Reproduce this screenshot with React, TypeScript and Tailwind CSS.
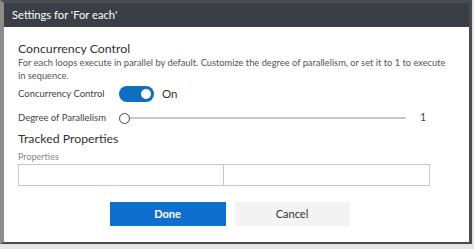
import React, { useState } from 'react';

const font = { fontFamily: 'Lato, "Noto Sans", sans-serif' };

const App: React.FC = () => {
  const [on, setOn] = useState(true);
  const [degree, setDegree] = useState(1);

  return (
    <div className="w-[474px] h-[249px] bg-[#e4e4e4] overflow-hidden" style={font}>
      <div className="w-[472px] h-[244px] flex flex-col border-t-[3px] border-t-[#4a4d52] border-l-[4px] border-l-[#8c8c8c] border-r-[3px] border-r-[#4b4b4b] border-b-[2px] border-b-[#4b4b4b] bg-white">
        <div className="h-[24px] bg-[#3b3f45] text-white text-[11.2px] leading-[24px] pl-[8px] shrink-0">
          Settings for 'For each'
        </div>

        <div className="flex flex-col pl-[14px] pr-[14px]">
          <div className="mt-[15px] h-[14px] text-[12.3px] leading-[14px] text-[#323130]">Concurrency Control</div>
          <div className="h-[26px] text-[9.3px] leading-[13px] text-[#555]">
            For each loops execute in parallel by default. Customize the degree of parallelism, or set it to 1 to execute in sequence.
          </div>

          <div className="flex items-center mt-[4px] h-[16px]">
            <div className="w-[101px] whitespace-nowrap text-[9.5px] text-[#444]">Concurrency Control</div>
            <button
              onClick={() => setOn(!on)}
              className={`w-[35px] h-[16px] rounded-full flex items-center px-[3px] ${on ? 'bg-[#106ebe] justify-end' : 'bg-[#c8c8c8] justify-start'}`}
            >
              <span className="w-[10px] h-[10px] rounded-full bg-white block" />
            </button>
            <span className="ml-[8px] text-[11.5px] text-[#333]">{on ? 'On' : 'Off'}</span>
          </div>

          <div className="flex items-center mt-[8px] h-[16px]">
            <div className="w-[101px] whitespace-nowrap text-[9.5px] text-[#444]">Degree of Parallelism</div>
            <div className="relative w-[287px] h-[11px] flex items-center">
              <div className="absolute left-[8px] right-0 h-[2.5px] bg-[#c8c8c8] rounded" />
              <span
                onClick={() => setDegree(1)}
                className="absolute left-0 w-[11px] h-[11px] rounded-full bg-white border-[1.5px] border-[#444]"
              />
            </div>
            <span className="ml-[14px] text-[10.5px] text-[#444]">{degree}</span>
          </div>

          <div className="mt-[5px] h-[16px] text-[12.3px] leading-[16px] text-[#323130]">Tracked Properties</div>
          <div className="h-[12px] text-[9px] leading-[12px] text-[#888] mt-[4px]">Properties</div>
          <div className="flex mt-[1px] w-[412px]">
            <input className="w-[206px] h-[22px] border border-[#c6c6c6] outline-none px-1 text-[11px]" />
            <input className="w-[206px] h-[22px] border border-l-0 border-[#c6c6c6] outline-none px-1 text-[11px]" />
          </div>

          <div className="flex justify-center gap-[9px] mt-[16px] pr-[14px]">
            <button className="w-[116px] h-[24px] bg-[#0f6fcf] text-white text-[11px] font-bold">Done</button>
            <button className="w-[115px] h-[24px] bg-[#f3f3f3] text-[#333] text-[11px]">Cancel</button>
          </div>
        </div>
      </div>
    </div>
  );
};

export default App;
